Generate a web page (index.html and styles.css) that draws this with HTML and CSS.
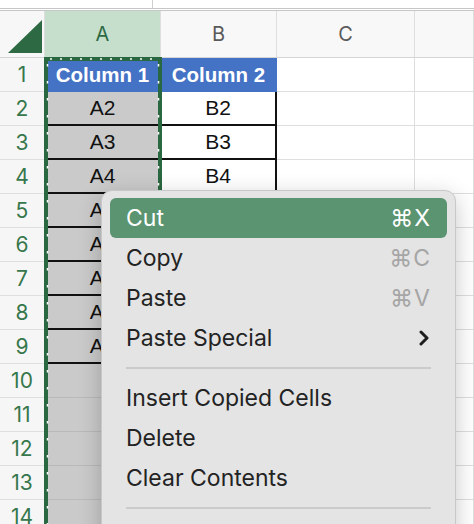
FILE: index.html
```html
<!DOCTYPE html>
<html>
<head>
<meta charset="utf-8">
<link rel="stylesheet" href="styles.css">
</head>
<body>
<div class="page">
  <div class="topbar"><div class="tb-left"></div></div>
  <div class="grid">
    <div class="corner"><svg width="44" height="46" viewBox="0 0 44 46"><polygon points="8,42 42,42 42,9" fill="#2d6a43"/></svg></div>
    <div class="colhead colhead-sel">A</div>
    <div class="colhead">B</div>
    <div class="colhead">C</div>
    <div class="colhead"></div>

    <div class="rowhead">1</div><div class="cell thead">Column 1</div><div class="cell thead">Column 2</div><div class="cell"></div><div class="cell"></div>
    <div class="rowhead">2</div><div class="cell sel tb">A2</div><div class="cell tbr">B2</div><div class="cell"></div><div class="cell"></div>
    <div class="rowhead">3</div><div class="cell sel tb">A3</div><div class="cell tbr">B3</div><div class="cell"></div><div class="cell"></div>
    <div class="rowhead">4</div><div class="cell sel tb">A4</div><div class="cell tbr">B4</div><div class="cell"></div><div class="cell"></div>
    <div class="rowhead">5</div><div class="cell sel tb">A5</div><div class="cell tbr">B5</div><div class="cell"></div><div class="cell"></div>
    <div class="rowhead">6</div><div class="cell sel tb">A6</div><div class="cell tbr">B6</div><div class="cell"></div><div class="cell"></div>
    <div class="rowhead">7</div><div class="cell sel tb">A7</div><div class="cell tbr">B7</div><div class="cell"></div><div class="cell"></div>
    <div class="rowhead">8</div><div class="cell sel tb">A8</div><div class="cell tbr">B8</div><div class="cell"></div><div class="cell"></div>
    <div class="rowhead">9</div><div class="cell sel tb">A9</div><div class="cell tbr">B9</div><div class="cell"></div><div class="cell"></div>
    <div class="rowhead">10</div><div class="cell sel"></div><div class="cell"></div><div class="cell"></div><div class="cell"></div>
    <div class="rowhead">11</div><div class="cell sel"></div><div class="cell"></div><div class="cell"></div><div class="cell"></div>
    <div class="rowhead">12</div><div class="cell sel"></div><div class="cell"></div><div class="cell"></div><div class="cell"></div>
    <div class="rowhead">13</div><div class="cell sel"></div><div class="cell"></div><div class="cell"></div><div class="cell"></div>
    <div class="rowhead">14</div><div class="cell sel"></div><div class="cell"></div><div class="cell"></div><div class="cell"></div>
  </div>

  <svg class="selection" width="122" height="470" viewBox="0 0 122 470">
    <path d="M4 470 V3 H118 V470" fill="none" stroke="#2a6841" stroke-width="4"/>
    <path d="M5.5 8 V470" fill="none" stroke="#fff" stroke-width="1.5" stroke-dasharray="2.5 14.5"/>
    <path d="M8 3 H114" fill="none" stroke="#fff" stroke-width="1.5" stroke-dasharray="2 8"/>
    <path d="M116.5 8 V470" fill="none" stroke="#fff" stroke-width="1.5" stroke-dasharray="2.5 14.5"/>
  </svg>

  <div class="menu">
    <div class="item active"><span>Cut</span><span class="key">⌘X</span></div>
    <div class="item"><span>Copy</span><span class="key dim">⌘C</span></div>
    <div class="item"><span>Paste</span><span class="key dim">⌘V</span></div>
    <div class="item"><span>Paste Special</span><svg class="chev" width="10" height="16" viewBox="0 0 10 16"><path d="M2 2 L8 8 L2 14" fill="none" stroke="#1e1e1e" stroke-width="3" stroke-linecap="round" stroke-linejoin="round"/></svg></div>
    <div class="sep"></div>
    <div class="item"><span>Insert Copied Cells</span></div>
    <div class="item"><span>Delete</span></div>
    <div class="item"><span>Clear Contents</span></div>
    <div class="sep"></div>
  </div>
</div>
</body>
</html>
```
FILE: styles.css
```css
html, body {
  margin: 0;
  padding: 0;
  background: #fff;
  overflow: hidden;
}
.page {
  position: relative;
  width: 474px;
  height: 524px;
  overflow: hidden;
}
.topbar {
  height: 8px;
  border-bottom: 3px double #c6c6c6;
  background: #fff;
}
.tb-left {
  width: 152px;
  height: 8px;
  border-right: 1px solid #cfcfcf;
}
.grid {
  display: grid;
  grid-template-columns: 45px 116px 116px 138px 1fr;
  grid-template-rows: 47px repeat(14, 34px);
}
.grid > div {
  box-sizing: border-box;
  border-right: 1px solid #dedede;
  border-bottom: 1px solid #dedede;
  display: flex;
  align-items: center;
  justify-content: center;
}
.corner {
  background: #f7f7f7;
  align-items: flex-start !important;
  justify-content: flex-start !important;
  border-bottom-color: #d4d4d4 !important;
}
.corner svg { display: block; }
.colhead {
  background: #f8f8f8;
  font-family: Inter, "Liberation Sans", sans-serif;
  font-size: 20px;
  color: #5a5a5a;
  border-bottom-color: #d4d4d4 !important;
}
.colhead-sel {
  background: #c5dfcc;
  color: #2e6a44;
}
.rowhead {
  background: #f6f6f6;
  font-family: Inter, "Liberation Sans", sans-serif;
  font-size: 21px;
  color: #37774c;
  border-right-color: #d6d6d6 !important;
}
.cell {
  font-family: "Liberation Sans", Arial, sans-serif;
  font-size: 21px;
  color: #111;
  background: #fff;
}
.thead {
  background: #4472c4;
  color: #fff;
  font-weight: bold;
  font-size: 20.5px;
  border-right-color: #4472c4 !important;
  border-bottom-color: #4472c4 !important;
}
.sel {
  background: #cacaca;
  border-bottom-color: #b9b9b9 !important;
}
.tb {
  border-bottom: 2px solid #111 !important;
}
.tbr {
  border-bottom: 2px solid #111 !important;
  border-right: 2px solid #111 !important;
}
.selection {
  position: absolute;
  left: 42px;
  top: 56px;
  display: block;
}
.menu {
  position: absolute;
  left: 101px;
  top: 190px;
  width: 355px;
  height: 380px;
  box-sizing: border-box;
  padding: 7px 8px;
  background: #e4e4e4;
  border: 1px solid #c8c8c8;
  border-radius: 11px;
  box-shadow: 0 6px 22px rgba(0, 0, 0, 0.22);
  font-family: Inter, "Liberation Sans", sans-serif;
  font-size: 23px;
  color: #232323;
}
.item {
  height: 40px;
  padding: 0 16px;
  border-radius: 6px;
  display: flex;
  align-items: center;
  justify-content: space-between;
}
.item.active {
  background: #5b9470;
  color: #fff;
}
.key {
  font-family: Inter, "DejaVu Sans", sans-serif;
  letter-spacing: 1px;
}
.key.dim { color: #a6a6a6; }
.chev { display: block; margin-right: 2px; }
.sep {
  height: 20px;
  padding: 0 16px;
  display: flex;
  align-items: center;
}
.sep::after {
  content: "";
  flex: 1;
  height: 2px;
  background: #cbcbcb;
}
```
